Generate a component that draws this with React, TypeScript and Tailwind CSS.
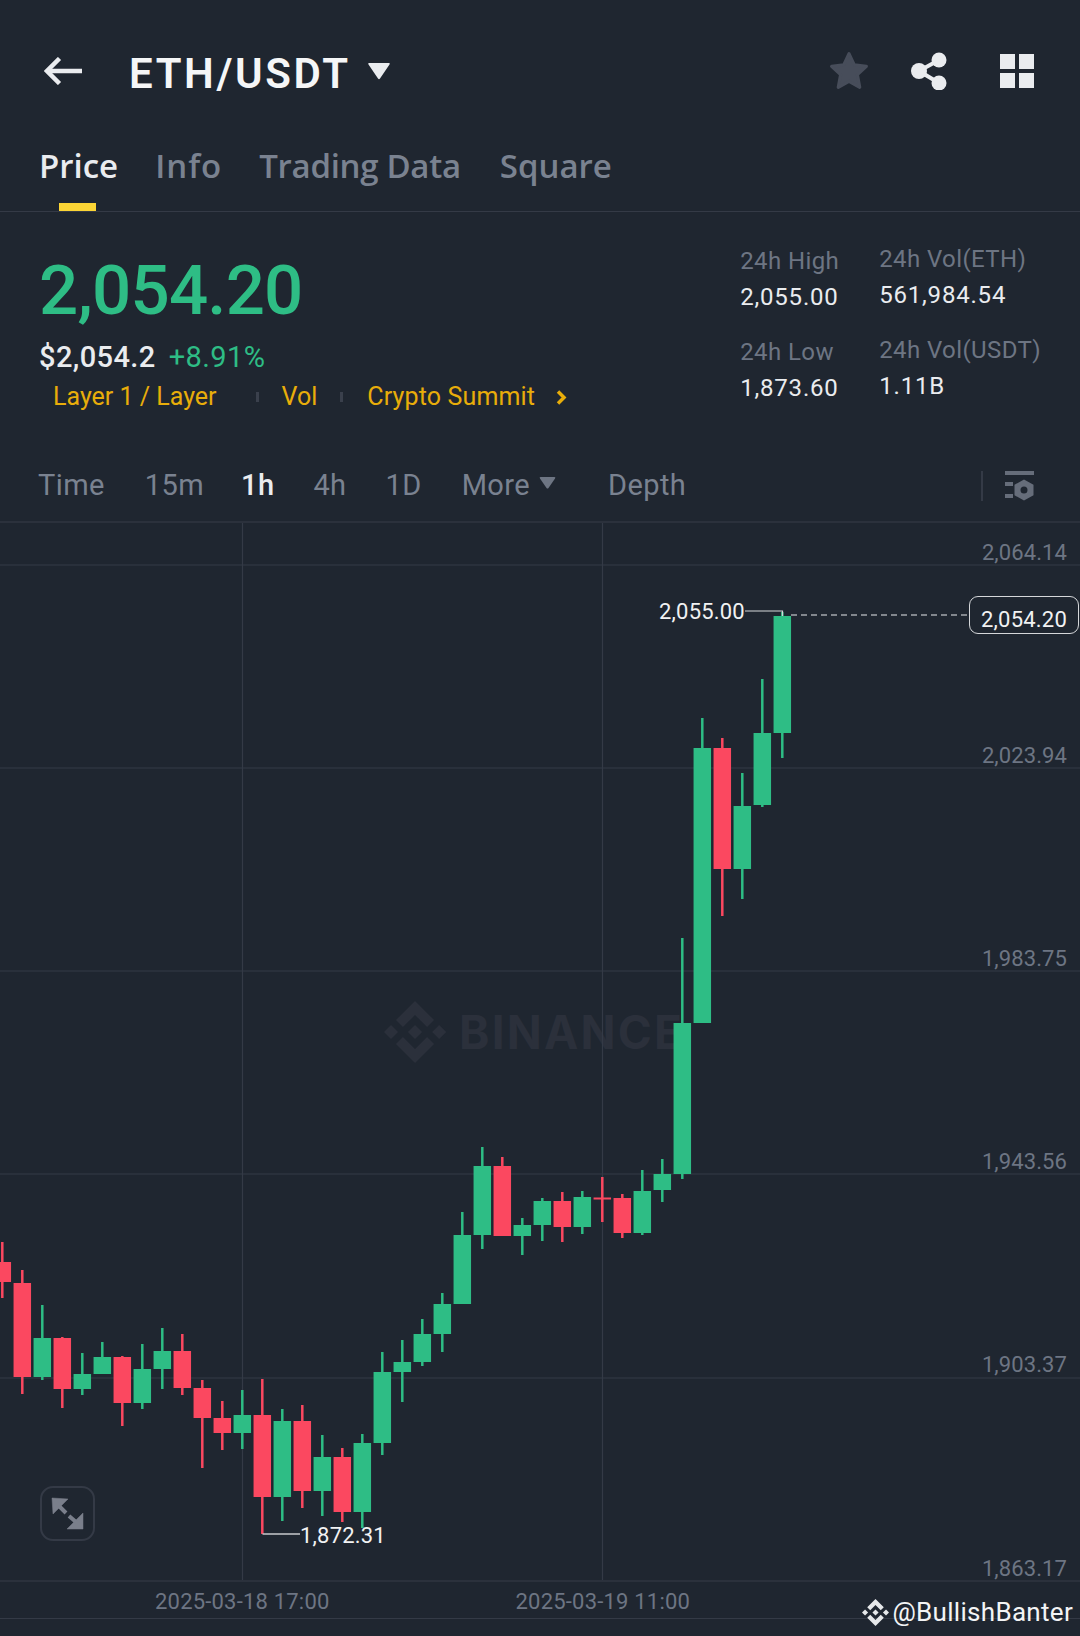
import React from "react";

type C = [string, number, number, number, number];
// colour, wick top, body top, body bottom, wick bottom
const candles: C[] = [
  ["r", 1242, 1262, 1282, 1298],
  ["r", 1270, 1283, 1377, 1394],
  ["g", 1305, 1338, 1377, 1380],
  ["r", 1337, 1338, 1389, 1408],
  ["g", 1353, 1374, 1389, 1395],
  ["g", 1342, 1357, 1374, 1374],
  ["r", 1356, 1357, 1403, 1426],
  ["g", 1344, 1369, 1403, 1409],
  ["g", 1328, 1351, 1369, 1389],
  ["r", 1334, 1351, 1388, 1395],
  ["r", 1380, 1388, 1418, 1468],
  ["r", 1401, 1418, 1433, 1450],
  ["g", 1390, 1415, 1433, 1449],
  ["r", 1379, 1415, 1497, 1534],
  ["g", 1409, 1421, 1497, 1521],
  ["r", 1405, 1421, 1491, 1508],
  ["g", 1435, 1457, 1491, 1516],
  ["r", 1448, 1457, 1512, 1522],
  ["g", 1434, 1443, 1512, 1528],
  ["g", 1352, 1372, 1443, 1455],
  ["g", 1340, 1362, 1372, 1402],
  ["g", 1319, 1334, 1362, 1366],
  ["g", 1293, 1304, 1334, 1352],
  ["g", 1212, 1235, 1304, 1304],
  ["g", 1147, 1166, 1235, 1249],
  ["r", 1157, 1166, 1236, 1236],
  ["g", 1218, 1225, 1236, 1255],
  ["g", 1198, 1201, 1225, 1241],
  ["r", 1192, 1201, 1227, 1242],
  ["g", 1191, 1197, 1227, 1234],
  ["r", 1177, 1197.5, 1199.5, 1222],
  ["r", 1194, 1198, 1233, 1238],
  ["g", 1170, 1191, 1233, 1235],
  ["g", 1159, 1174, 1190, 1202],
  ["g", 938, 1023, 1174, 1179],
  ["g", 718, 748, 1023, 1023],
  ["r", 738, 748, 869, 916],
  ["g", 773, 806, 869, 899],
  ["g", 679, 733, 805, 807],
  ["g", 612, 616, 733, 758],
];

const LOGO =
  "M38.73 53.2l24.59-24.58 24.6 24.6 14.3-14.31L63.32 0 24.42 38.9l14.31 14.3zM0 63.31l14.31-14.31 14.31 14.31-14.31 14.31zM38.73 73.41l24.59 24.59 24.6-24.6 14.31 14.29-38.9 38.91-38.91-38.88-.01-.01 14.32-14.3zM98.28 63.31l14.31-14.31 14.31 14.31-14.31 14.31zM77.83 63.3L63.32 48.78 52.59 59.51l-1.24 1.23-2.54 2.54 14.51 14.5 14.51-14.47z";

function Chart() {
  const hLines = [565, 768, 971, 1174, 1378];
  return (
    <svg viewBox="0 523 1080 1057" className="absolute inset-0 h-[1057px] w-[1080px]">
      {hLines.map((y) => (
        <line key={y} x1={0} x2={1080} y1={y} y2={y} stroke="#343a46" strokeWidth={1.2} />
      ))}
      {[242.5, 602.5].map((x) => (
        <line key={x} x1={x} x2={x} y1={523} y2={1580} stroke="#343a46" strokeWidth={1.2} />
      ))}
      {candles.map(([c, wt, bt, bb, wb], i) => {
        const x = 2.3 + 20 * i;
        const col = c === "g" ? "#2ebd85" : "#fb4860";
        return (
          <g key={i} fill={col}>
            <rect x={x - 1.25} y={wt} width={2.5} height={wb - wt} />
            <rect x={x - 8.75} y={bt} width={17.5} height={bb - bt} />
          </g>
        );
      })}
      <path d="M745 611H782.5V616" fill="none" stroke="#d5d7da" strokeWidth={1.2} />
      <line x1={791} x2={968} y1={615} y2={615} stroke="#e6e8ea" strokeWidth={1.2} strokeDasharray="6 4" />
      <path d="M262.5 1534H300" fill="none" stroke="#c8cacd" strokeWidth={1.4} />
    </svg>
  );
}

const Tab = ({ label, active, className = "" }: { label: string; active?: boolean; className?: string }) => (
  <div className={`relative flex h-[69px] items-start ${className}`}>
    <span className={`text-[33px] leading-[48px] font-semibold ${active ? "text-[#eaecef]" : "text-[#7a8290]"}`}>{label}</span>
    {active && <div className="absolute bottom-0 left-[20px] h-[8px] w-[37px] bg-[#fcd535]" />}
  </div>
);

const Stat = ({ label, value }: { label: string; value: string }) => (
  <div className="flex flex-col">
    <span className="text-[24px] leading-[30px] tracking-[0.4px] whitespace-nowrap text-[#6d7583]">{label}</span>
    <span className="mt-[6px] text-[24px] leading-[30px] tracking-[0.8px] whitespace-nowrap text-[#eaecef]">{value}</span>
  </div>
);

const axisLabel = "absolute right-[13px] text-[22px] leading-[22px] tracking-[0.1px] text-[#6d7583]";
const lightLabel = "absolute text-[22px] leading-[22px] tracking-[0.2px] text-[#f1f2f3]";

export default function App() {
  return (
    <div className="relative h-[1636px] w-[1080px] overflow-hidden bg-[#1f2630] font-['Roboto',sans-serif]">
      {/* Header */}
      <header className="flex h-[142px] items-center pr-[46px] pl-[44px]">
        <svg width="38" height="28" viewBox="0 0 38 28" fill="none" stroke="#eaecef" strokeWidth="4.5">
          <path d="M38 14H3" />
          <path d="M15.5 1.5L3 14L15.5 26.5" />
        </svg>
        <h1 className="mt-[6px] ml-[47px] text-[42px] leading-none font-semibold tracking-[2.6px] text-[#f5f6f7]">ETH/USDT</h1>
        <svg className="ml-[16px]" width="24" height="17" viewBox="0 0 23 17" fill="#eaecef">
          <path d="M1.5 0H21.5Q23 0 22 1.5L12.5 15.5Q11.5 17 10.5 15.5L1 1.5Q0 0 1.5 0Z" />
        </svg>
        <div className="ml-auto flex items-center">
          <svg width="40" height="40" viewBox="0 0 38 38" fill="#474d5a" stroke="#474d5a" strokeWidth="3" strokeLinejoin="round">
            <path d="M19 2.5L24 13.2L35.5 14.6L27 22.5L29.2 34.5L19 28.8L8.8 34.5L11 22.5L2.5 14.6L14 13.2Z" />
          </svg>
          <svg className="ml-[41px]" width="38" height="38" viewBox="0 0 38 38" fill="#eaecef">
            <circle cx="29" cy="8" r="7.5" />
            <circle cx="9" cy="19" r="8" />
            <circle cx="29" cy="31" r="7.5" />
            <path d="M29 8L9 19L29 31" fill="none" stroke="#eaecef" strokeWidth="4" />
          </svg>
          <div className="ml-[52px] grid h-[34px] w-[34px] grid-cols-2 gap-[4px]">
            <div className="bg-[#eaecef]" />
            <div className="bg-[#eaecef]" />
            <div className="bg-[#eaecef]" />
            <div className="bg-[#eaecef]" />
          </div>
        </div>
      </header>

      {/* Tabs */}
      <nav className="flex h-[70px] gap-[37px] border-b border-[#343a46] pl-[39px] font-['Open_Sans']">
        <Tab label="Price" active />
        <Tab label="Info" className="tracking-[1px]" />
        <Tab label="Trading Data" className="tracking-[-0.3px]" />
        <Tab label="Square" className="ml-[2px]" />
      </nav>

      {/* Price info */}
      <section className="flex h-[239px] justify-between">
        <div className="pl-[39px]">
          <div className="mt-[39px] text-[69px] leading-[80px] font-medium tracking-[-0.8px] text-[#2ebd85]">2,054.20</div>
          <div className="mt-[8px] flex items-baseline gap-[13px] text-[29px] leading-[36px] tracking-[0.4px]">
            <span className="font-medium text-[#eaecef]">$2,054.2</span>
            <span className="text-[#2ebd85]">+8.91%</span>
          </div>
          <div className="mt-[5px] flex items-center pl-[14px] text-[25px] leading-[34px] text-[#e8ad0a]">
            <span>Layer 1 / Layer</span>
            <span className="mr-[23px] ml-[39px] h-[10px] w-[3px] bg-[#3a404c]" />
            <span>Vol</span>
            <span className="mr-[24px] ml-[23px] h-[10px] w-[3px] bg-[#3a404c]" />
            <span className="tracking-[0.15px]">Crypto Summit</span>
            <svg className="ml-[21px]" width="11" height="15" viewBox="0 0 11 15" fill="none" stroke="#e8ad0a" strokeWidth="3.5">
              <path d="M2 1.5L8 7.5L2 13.5" />
            </svg>
          </div>
        </div>
        <div className="flex gap-[40px] pr-[39px]">
          <div className="mt-[34px] flex flex-col gap-[25px]">
            <Stat label="24h High" value="2,055.00" />
            <Stat label="24h Low" value="1,873.60" />
          </div>
          <div className="mt-[32px] flex flex-col gap-[25px]">
            <Stat label="24h Vol(ETH)" value="561,984.54" />
            <Stat label="24h Vol(USDT)" value="1.11B" />
          </div>
        </div>
      </section>

      {/* Interval row */}
      <div className="flex h-[72px] items-center border-b-2 border-[#2b313c] pr-[45px] pl-[38px] text-[29px] tracking-[0.4px] text-[#7a8290]">
        <span>Time</span>
        <span className="ml-[40px]">15m</span>
        <span className="ml-[37px] font-medium text-[#eaecef]">1h</span>
        <span className="ml-[39px]">4h</span>
        <span className="ml-[39px]">1D</span>
        <span className="ml-[40px]">More</span>
        <svg className="mb-[6px] ml-[9px]" width="17" height="12" viewBox="0 0 17 12" fill="#6d7583">
          <path d="M1.5 0H15.5Q17 0 16 1.5L9.5 11Q8.5 12 7.5 11L1 1.5Q0 0 1.5 0Z" />
        </svg>
        <span className="ml-[52px]">Depth</span>
        <div className="ml-auto h-[30px] w-[2px] bg-[#343a46]" />
        <svg className="ml-[22px]" width="30" height="30" viewBox="0 0 30 30" fill="#666d7a">
          <rect x="0" y="0" width="29" height="4" />
          <rect x="0" y="11" width="8" height="4" />
          <rect x="0" y="23" width="8" height="4" />
          <path fillRule="evenodd" d="M19 8.5L28.5 13.8V24.2L19 29.5L9.5 24.2V13.8ZM19 15.5A3.5 3.5 0 1 0 19 22.5A3.5 3.5 0 1 0 19 15.5Z" />
        </svg>
      </div>

      {/* Chart */}
      <main className="relative h-[1057px] w-[1080px]">
        <div className="absolute top-[478px] left-[384px] flex items-center gap-[13px] text-[#2b303b]">
          <svg width="62" height="62" viewBox="0 0 126.61 126.61" fill="currentColor">
            <path d={LOGO} />
          </svg>
          <span className="font-['Inter'] text-[46px] leading-none font-bold tracking-[2.2px]">BINANCE</span>
        </div>
        <Chart />

        <div className={`${axisLabel} top-[19px]`}>2,064.14</div>
        <div className={`${axisLabel} top-[222px]`}>2,023.94</div>
        <div className={`${axisLabel} top-[425px]`}>1,983.75</div>
        <div className={`${axisLabel} top-[628px]`}>1,943.56</div>
        <div className={`${axisLabel} top-[831px]`}>1,903.37</div>
        <div className={`${axisLabel} top-[1035px]`}>1,863.17</div>

        <div className="absolute top-[73px] left-[969px] flex h-[38px] w-[110px] items-end justify-center rounded-[9px] border border-[#d5d7da] bg-[#1f2630] text-[22px] leading-[26px] tracking-[0.2px] text-[#f1f2f3]">2,054.20</div>
        <div className={`${lightLabel} top-[78px] left-[659px]`}>2,055.00</div>
        <div className={`${lightLabel} top-[1002px] left-[300px]`}>1,872.31</div>

        <div className="absolute top-[963px] left-[40px] h-[55px] w-[55px] rounded-[13px] border-2 border-[#343a46]">
          <svg width="51" height="51" viewBox="0 0 51 51" fill="#7a7f8b" stroke="#7a7f8b">
            <path d="M10 10L26 11L11 26Z" strokeWidth="0.5" />
            <path d="M41 25V41H25Z" strokeWidth="0.5" />
            <path d="M17 18L24 25M27 28L34 34" fill="none" strokeWidth="4" />
          </svg>
        </div>
      </main>

      {/* Time axis */}
      <div className="flex h-[39px] items-center border-t-2 border-b border-t-[#2b313c] border-b-[#343a46] pt-[2px] pl-[155px] text-[22px] tracking-[0.2px] text-[#6d7583]">
        <span>2025-03-18 17:00</span>
        <span className="ml-[186px]">2025-03-19 11:00</span>
      </div>

      {/* Author watermark */}
      <div className="absolute top-[1596px] right-[7px] flex items-center gap-[3px] text-[26px] leading-[32px] tracking-[0.3px] text-[#f3f4f5]">
        <svg width="27" height="27" viewBox="0 0 126.61 126.61" fill="#e6e8ea">
          <path d={LOGO} />
        </svg>
        <span>@BullishBanter</span>
      </div>
    </div>
  );
}
